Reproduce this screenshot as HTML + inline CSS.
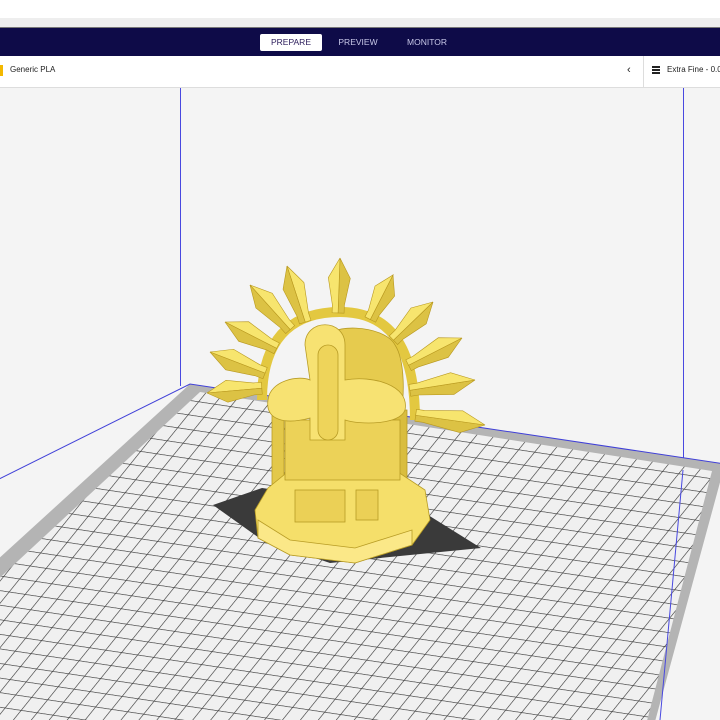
<!DOCTYPE html>
<html><head><style>
body{margin:0;width:720px;height:720px;overflow:hidden;background:#f4f4f4;font-family:"Liberation Sans",sans-serif}
.top{position:absolute;left:0;top:0;width:720px;height:18px;background:#fff}
.gray{position:absolute;left:0;top:18px;width:720px;height:9px;background:#eeeeee}
.nav{position:absolute;left:0;top:27px;width:720px;height:29px;background:#0e0b48;border-top:1px solid #777}
.tab{position:absolute;top:6px;height:17px;line-height:17px;font-size:8.5px;color:#c8c8e8;text-align:center}
.sel{background:#fff;color:#2a1b5a;border-radius:2px}
.bar{position:absolute;left:0;top:56px;width:720px;height:31px;background:#fff;border-bottom:1px solid #ddd}
</style></head><body>
<div class="top"></div><div class="gray"></div>
<div class="nav">
<div class="tab sel" style="left:260px;width:62px">PREPARE</div>
<div class="tab" style="left:334px;width:48px">PREVIEW</div>
<div class="tab" style="left:402px;width:50px">MONITOR</div>
</div>
<div class="bar">
<div style="position:absolute;left:0;top:9px;width:3px;height:11px;background:#f3b800"></div>
<div style="position:absolute;left:10px;top:9px;font-size:8px;color:#222">Generic PLA</div>
<div style="position:absolute;left:627px;top:8px;font-size:11px;color:#222">‹</div>
<div style="position:absolute;left:643px;top:0;width:1px;height:31px;background:#ddd"></div>
<div style="position:absolute;left:652px;top:10px;width:8px;height:2px;background:#222;box-shadow:0 3px 0 #222,0 6px 0 #222"></div>
<div style="position:absolute;left:667px;top:9px;font-size:8px;color:#222;white-space:nowrap">Extra Fine - 0.0</div>
</div>
<svg style="position:absolute;left:0;top:88px" width="720" height="632" viewBox="0 88 720 632">
<defs>
<pattern id="g" width="1" height="1" patternUnits="userSpaceOnUse" patternTransform="matrix(16,2.4,-10.5,13,193,386)">
<rect width="1" height="1" fill="#f0f0f0"/>
<path d="M0 0H1M0 0V1" stroke="#3a3a3a" stroke-width="0.09"/>
</pattern>
</defs>
<line x1="180.5" y1="88" x2="180.5" y2="386" stroke="#4848e0" stroke-width="1"/>
<line x1="683.5" y1="88" x2="683.5" y2="470" stroke="#4848e0" stroke-width="1"/>
<polygon points="190,384 725,464 650,740 -200,740" fill="#b4b4b4"/>
<polygon points="200,392 712,471 642,740 -175,740" fill="url(#g)"/>
<polyline points="-200,578 190,384 725,464" fill="none" stroke="#4040d8" stroke-width="1"/>
<line x1="683" y1="470" x2="660" y2="720" stroke="#4848e0" stroke-width="1"/>
<polygon points="213,505 262,488 420,510 481,548 330,563 262,540" fill="#3a3a3a"/>
<path d="M262,400 C262,330 300,312 340,312 C385,312 415,340 415,420" fill="none" stroke="#e3c840" stroke-width="10"/>
<g stroke="#b8981e" stroke-width="0.6">
<g id="s">
</g>
<g transform="translate(207,393) rotate(-5)"><polygon points="0,0 20,-11 47,-6 55,-6 55,0" fill="#f7e56e"/><polygon points="0,0 55,0 55,6 47,6 20,11" fill="#dcc244"/></g>
<g transform="translate(210,352) rotate(21)"><polygon points="0,0 21,-11 51,-6 59,-6 59,0" fill="#f7e56e"/><polygon points="0,0 59,0 59,6 51,6 21,11" fill="#dcc244"/></g>
<g transform="translate(225,322) rotate(27)"><polygon points="0,0 21,-11 50,-6 58,-6 58,0" fill="#f7e56e"/><polygon points="0,0 58,0 58,6 50,6 21,11" fill="#dcc244"/></g>
<g transform="translate(250,285) rotate(48)"><polygon points="0,0 21,-11 52,-6 60,-6 60,0" fill="#f7e56e"/><polygon points="0,0 60,0 60,6 52,6 21,11" fill="#dcc244"/></g>
<g transform="translate(287,266) rotate(72)"><polygon points="0,0 21,-11 51,-6 59,-6 59,0" fill="#f7e56e"/><polygon points="0,0 59,0 59,6 51,6 21,11" fill="#dcc244"/></g>
<g transform="translate(340,258) rotate(92)"><polygon points="0,0 20,-11 47,-6 55,-6 55,0" fill="#dcc244"/><polygon points="0,0 55,0 55,6 47,6 20,11" fill="#f7e56e"/></g>
<g transform="translate(393,275) rotate(117)"><polygon points="0,0 18,-11 42,-6 50,-6 50,0" fill="#dcc244"/><polygon points="0,0 50,0 50,6 42,6 18,11" fill="#f7e56e"/></g>
<g transform="translate(433,302) rotate(136)"><polygon points="0,0 20,-11 47,-6 55,-6 55,0" fill="#dcc244"/><polygon points="0,0 55,0 55,6 47,6 20,11" fill="#f7e56e"/></g>
<g transform="translate(462,338) rotate(153)"><polygon points="0,0 21,-11 52,-6 60,-6 60,0" fill="#dcc244"/><polygon points="0,0 60,0 60,6 52,6 21,11" fill="#f7e56e"/></g>
<g transform="translate(475,380) rotate(171)"><polygon points="0,0 23,-11 58,-6 66,-6 66,0" fill="#dcc244"/><polygon points="0,0 66,0 66,6 58,6 23,11" fill="#f7e56e"/></g>
<g transform="translate(485,425) rotate(188)"><polygon points="0,0 24,-11 62,-6 70,-6 70,0" fill="#dcc244"/><polygon points="0,0 70,0 70,6 62,6 24,11" fill="#f7e56e"/></g>
</g>
<g stroke="#b89c25" stroke-width="0.8">
<rect x="272" y="410" width="12" height="75" fill="#e3c84a"/>
<rect x="395" y="410" width="12" height="75" fill="#d9bd3e"/>
<path d="M255,510 L268,488 L290,470 L395,470 L425,490 L430,520 L412,545 L355,563 L290,555 L258,538 Z" fill="#f5df6a"/>
<path d="M258,520 L290,540 L355,548 L412,530 L412,545 L355,563 L290,555 L258,538 Z" fill="#fbe888"/>
<rect x="285" y="420" width="115" height="60" fill="#ecd258"/>
<path d="M320,345 C325,320 385,325 395,345 C405,360 405,400 400,415 L340,420 Z" fill="#e6cb4e"/>
<path d="M305,345 C305,318 345,318 345,345 L345,380 C372,375 410,385 405,410 C400,425 360,425 345,420 L345,440 L310,440 L310,418 C285,425 265,420 268,400 C270,380 300,375 310,380 Z" fill="#f7e272"/>
<rect x="318" y="345" width="20" height="95" rx="10" fill="#eed45a"/>
<rect x="295" y="490" width="50" height="32" fill="#ebd056"/>
<rect x="356" y="490" width="22" height="30" fill="#ebd056"/>
</g>
</svg>
</body></html>
